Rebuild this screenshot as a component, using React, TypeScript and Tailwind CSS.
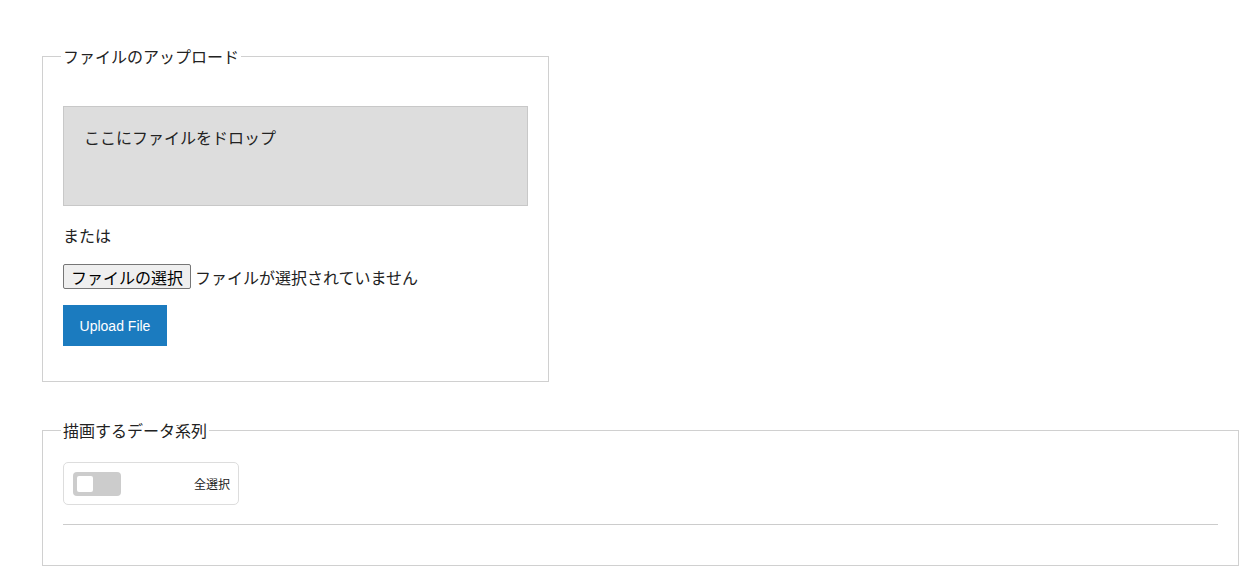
export default function App() {
    return (
        <div className="min-h-[579px] bg-white pl-[42px] pt-[44px] text-[16px] leading-6 text-[#222]" style={{ fontFamily: '"Noto Sans CJK JP", "Noto Sans", sans-serif' }}>
            <fieldset className="w-[507px] border border-[#d0d0d0] px-5 pb-[35px]">
                <legend className="px-0.5 -ml-0.5">ファイルのアップロード</legend>
                <div className="mt-[38px] h-[100px] w-[465px] border border-[#c8c8c8] bg-[#dddddd] px-5 pt-[18px]">
                    ここにファイルをドロップ
                </div>
                <p className="mt-[17px]">または</p>
                <div className="mt-[17px] flex items-center">
                    <button className="h-[25px] rounded-[2px] border border-[#767676] bg-[#efefef] px-[7px] text-[16px] leading-none text-black">
                        ファイルの選択
                    </button>
                    <span className="ml-[4px] text-[#222]">ファイルが選択されていません</span>
                </div>
                <button
                    className="mt-[16px] h-[41px] w-[104px] bg-[#1b7bbf] text-[14px] text-white"
                    style={{ fontFamily: '"Liberation Sans", Arial, sans-serif' }}
                >
                    Upload File
                </button>
            </fieldset>

            <fieldset className="mt-[36px] w-[1197px] border border-[#d0d0d0] px-5 pb-[40px]">
                <legend className="px-0.5 -ml-0.5">描画するデータ系列</legend>
                <div className="mt-[20px] flex h-[43px] w-[176px] items-center justify-between rounded-[5px] border border-[#dddddd] pl-[9px] pr-[8px]">
                    <div className="flex h-[24px] w-[48px] items-center rounded-[4px] bg-[#cccccc] pl-[4px]">
                        <div className="h-[16px] w-[16px] rounded-[2px] bg-white"></div>
                    </div>
                    <span className="text-[12px] text-[#222]">全選択</span>
                </div>
                <hr className="mt-[19px] border-t border-[#cccccc]" />
            </fieldset>
        </div>
    );
}
